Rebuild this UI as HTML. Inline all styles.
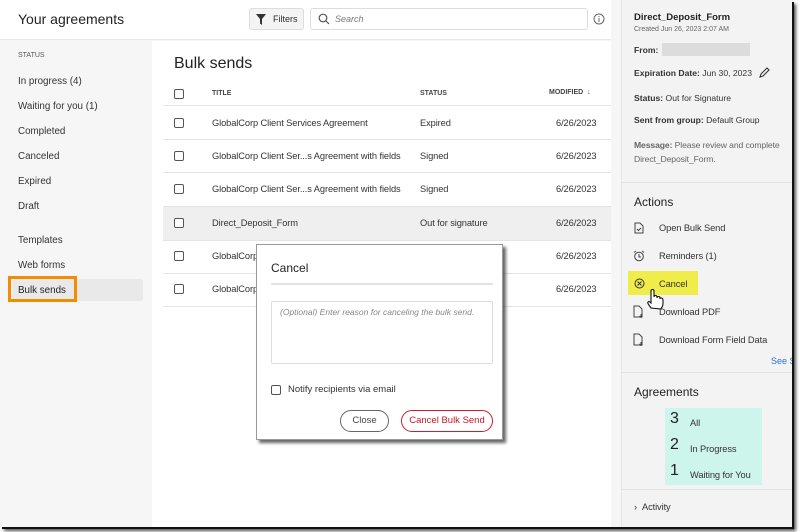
<!DOCTYPE html>
<html><head><meta charset="utf-8"><style>
*{margin:0;padding:0;box-sizing:border-box}
body{width:800px;height:532px;background:#fff;font-family:"Liberation Sans",sans-serif;position:relative;overflow:hidden;color:#2c2c2c}
.a{position:absolute;white-space:nowrap}
.frame{position:absolute;left:0;top:0;width:792px;height:527px;background:#f6f6f6;box-shadow:2px 2px 0 #111,4px 4px 3px #555;overflow:hidden}
.cb{position:absolute;width:10px;height:10px;border:1.5px solid #555;border-radius:2px;background:#fff}
.t{font-size:9.3px;color:#333;letter-spacing:-0.1px}
.sb{font-size:9.8px;color:#333}
.hr{position:absolute;height:1px;background:#e4e4e4}
.r{font-size:8.6px;color:#333}
</style></head><body>
<div class="frame">
 <div class="a" style="left:0;top:0;width:611px;height:40px;background:#fff;border-bottom:1px solid #e8e8e8"></div>
 <div class="a" style="left:18px;top:11px;font-size:14px;color:#222">Your agreements</div>
 <div class="a" style="left:249px;top:8px;width:55px;height:22px;border:1px solid #ddd;border-radius:3px;background:#f4f4f4;font-size:9px;padding:5px 0 0 23px">Filters</div>
 <svg class="a" style="left:256px;top:14px" width="10" height="11"><path d="M0 0h10L6 5v6L4 9.5V5z" fill="#333"/></svg>
 <div class="a" style="left:310px;top:8px;width:278px;height:22px;border:1px solid #ddd;border-radius:3px;background:#fff;font-size:9px;font-style:italic;color:#777;padding:5px 0 0 24px">Search</div>
 <svg class="a" style="left:318px;top:13px" width="12" height="12"><circle cx="5" cy="5" r="3.8" stroke="#555" fill="none" stroke-width="1.2"/><path d="M8 8l3 3" stroke="#555" stroke-width="1.2"/></svg>
 <svg class="a" style="left:593px;top:13px" width="12" height="12"><circle cx="6" cy="6" r="5" stroke="#666" fill="none"/><path d="M6 5v4M6 3v1" stroke="#666"/></svg>

 <div class="a" style="left:0;top:41px;width:152px;height:486px;background:#f6f6f6"></div>
 <div class="a" style="left:18px;top:52px;font-size:7px;color:#555">STATUS</div>
 <div class="a sb" style="left:18px;top:76px">In progress (4)</div>
 <div class="a sb" style="left:18px;top:101px">Waiting for you (1)</div>
 <div class="a sb" style="left:18px;top:126px">Completed</div>
 <div class="a sb" style="left:18px;top:151px">Canceled</div>
 <div class="a sb" style="left:18px;top:176px">Expired</div>
 <div class="a sb" style="left:18px;top:201px">Draft</div>
 <div class="a sb" style="left:18px;top:235px">Templates</div>
 <div class="a sb" style="left:18px;top:260px">Web forms</div>
 <div class="a" style="left:12px;top:279px;width:131px;height:22px;background:#e9e9e9;border-radius:3px"></div>
 <div class="a" style="left:8px;top:276px;width:69px;height:26px;border:3px solid #f28c00"></div>
 <div class="a sb" style="left:18px;top:285px;color:#222">Bulk sends</div>

 <div class="a" style="left:152px;top:41px;width:459px;height:486px;background:#fff"></div>
 <div class="a" style="left:174px;top:55px;font-size:16px;color:#222">Bulk sends</div>
 <div class="cb" style="left:174px;top:89px"></div>
 <div class="a" style="left:212px;top:90px;font-size:7px;color:#444;font-weight:bold">TITLE</div>
 <div class="a" style="left:420px;top:90px;font-size:7px;color:#444;font-weight:bold">STATUS</div>
 <div class="a" style="left:549px;top:89px;font-size:7px;color:#444;font-weight:bold">MODIFIED&nbsp; ↓</div>
 <div class="hr" style="left:163px;top:105px;width:448px"></div>
 <div class="a" style="left:163px;top:206px;width:448px;height:34px;background:#efefef"></div>

 <div class="cb" style="left:174px;top:118px"></div><div class="a t" style="left:212px;top:118px">GlobalCorp Client Services Agreement</div><div class="a t" style="left:420px;top:118px">Expired</div><div class="a t" style="left:556px;top:118px">6/26/2023</div>
 <div class="hr" style="left:163px;top:139px;width:448px"></div>
 <div class="cb" style="left:174px;top:151px"></div><div class="a t" style="left:212px;top:151px">GlobalCorp Client Ser...s Agreement with fields</div><div class="a t" style="left:420px;top:151px">Signed</div><div class="a t" style="left:556px;top:151px">6/26/2023</div>
 <div class="hr" style="left:163px;top:172px;width:448px"></div>
 <div class="cb" style="left:174px;top:184px"></div><div class="a t" style="left:212px;top:184px">GlobalCorp Client Ser...s Agreement with fields</div><div class="a t" style="left:420px;top:184px">Signed</div><div class="a t" style="left:556px;top:184px">6/26/2023</div>
 <div class="hr" style="left:163px;top:206px;width:448px"></div>
 <div class="cb" style="left:174px;top:218px"></div><div class="a t" style="left:212px;top:218px">Direct_Deposit_Form</div><div class="a t" style="left:420px;top:218px">Out for signature</div><div class="a t" style="left:556px;top:218px">6/26/2023</div>
 <div class="hr" style="left:163px;top:240px;width:448px"></div>
 <div class="cb" style="left:174px;top:251px"></div><div class="a t" style="left:212px;top:251px">GlobalCorp</div><div class="a t" style="left:556px;top:251px">6/26/2023</div>
 <div class="hr" style="left:163px;top:273px;width:448px"></div>
 <div class="cb" style="left:174px;top:284px"></div><div class="a t" style="left:212px;top:284px">GlobalCorp</div><div class="a t" style="left:556px;top:284px">6/26/2023</div>
 <div class="hr" style="left:163px;top:306px;width:448px"></div>

 <!-- dialog -->
 <div class="a" style="left:256px;top:244px;width:247px;height:196px;background:#fff;border:1px solid #999;box-shadow:3px 3px 3px rgba(0,0,0,.6)"></div>
 <div class="a" style="left:271px;top:261px;font-size:12px;color:#222">Cancel</div>
 <div class="a" style="left:271px;top:283px;width:222px;height:2px;background:#e2e2e2"></div>
 <div class="a" style="left:271px;top:301px;width:222px;height:63px;border:1px solid #ddd;border-radius:2px;font-size:8.5px;font-style:italic;color:#888;padding:5px 0 0 8px">(Optional) Enter reason for canceling the bulk send.</div>
 <div class="cb" style="left:271px;top:385px"></div>
 <div class="a" style="left:288px;top:384px;font-size:9.5px;color:#333">Notify recipients via email</div>
 <div class="a" style="left:340px;top:410px;width:49px;height:22px;border:1.5px solid #666;border-radius:11px;font-size:9.5px;text-align:center;line-height:19px;color:#444">Close</div>
 <div class="a" style="left:401px;top:410px;width:92px;height:22px;border:1.5px solid #d7192b;border-radius:11px;font-size:9.5px;text-align:center;line-height:19px;color:#c5172a">Cancel Bulk Send</div>

 <!-- right panel -->
 <div class="a" style="left:621px;top:0;width:171px;height:527px;background:#f3f3f3;border-left:1px solid #e6e6e6"></div>
 <div class="a" style="left:634px;top:12px;font-size:9.5px;font-weight:bold;color:#222">Direct_Deposit_Form</div>
 <div class="a" style="left:634px;top:26px;font-size:7px;color:#666">Created Jun 26, 2023 2:07 AM</div>
 <div class="a r" style="left:634px;top:45px;font-weight:bold">From:</div>
 <div class="a" style="left:662px;top:43px;width:88px;height:13px;background:#dcdcdc"></div>
 <div class="a r" style="left:634px;top:68px"><b>Expiration Date:</b> Jun 30, 2023</div>
 <svg class="a" style="left:759px;top:67px" width="11" height="11"><path d="M1 10l1-3 6-6 2 2-6 6z" fill="none" stroke="#333" stroke-width="1.1"/></svg>
 <div class="a r" style="left:634px;top:93px"><b>Status:</b> Out for Signature</div>
 <div class="a r" style="left:634px;top:115px"><b>Sent from group:</b> Default Group</div>
 <div class="a r" style="left:634px;top:138px;color:#666;line-height:14px;letter-spacing:-0.1px"><b>Message:</b> Please review and complete<br>Direct_Deposit_Form.</div>
 <div class="hr" style="left:622px;top:182px;width:170px"></div>
 <div class="a" style="left:634px;top:195px;font-size:12px;color:#222">Actions</div>
 <svg class="a" style="left:634px;top:222px" width="10" height="12"><path d="M1 1h5l3 3v7H1z" fill="none" stroke="#444"/><path d="M3 7l1.5 1.5L7 6" fill="none" stroke="#444"/></svg>
 <div class="a t" style="left:659px;top:223px">Open Bulk Send</div>
 <svg class="a" style="left:633px;top:250px" width="12" height="12"><circle cx="6" cy="6.5" r="4.3" fill="none" stroke="#444"/><path d="M6 4v3h2M1 2.5l2-1.5M11 2.5L9 1" fill="none" stroke="#444"/></svg>
 <div class="a t" style="left:659px;top:251px">Reminders (1)</div>
 <div class="a" style="left:628px;top:271px;width:70px;height:24px;background:#f0ec4a"></div>
 <svg class="a" style="left:634px;top:278px" width="11" height="11"><circle cx="5.5" cy="5.5" r="4.5" fill="none" stroke="#333"/><path d="M3.5 3.5l4 4M7.5 3.5l-4 4" stroke="#333"/></svg>
 <div class="a t" style="left:659px;top:279px">Cancel</div>
 <svg class="a" style="left:633px;top:305px" width="11" height="13"><path d="M1 1h5l3 3v8H1z" fill="none" stroke="#444"/><path d="M8 9v3M6.5 11l1.5 1.5L9.5 11" fill="none" stroke="#444"/></svg>
 <div class="a t" style="left:659px;top:307px">Download PDF</div>
 <svg class="a" style="left:646px;top:288px" width="18" height="22"><path d="M5 20c-2-3-4-5-3-6s2 0 3 1V3c0-2 3-2 3 0v6c0-2 3-2 3 0v1c0-2 3-2 3 0v1c0-2 3-1 3 1v4c0 3-2 4-2 5z" fill="#fff" stroke="#111" stroke-width="1.1"/></svg>
 <svg class="a" style="left:633px;top:333px" width="11" height="13"><path d="M1 1h5l3 3v8H1z" fill="none" stroke="#444"/><path d="M8 9v3M6.5 11l1.5 1.5L9.5 11" fill="none" stroke="#444"/></svg>
 <div class="a t" style="left:659px;top:335px">Download Form Field Data</div>
 <div class="a" style="left:771px;top:356px;font-size:9px;color:#2d6fd6">See S</div>
 <div class="hr" style="left:622px;top:372px;width:170px"></div>
 <div class="a" style="left:634px;top:385px;font-size:12px;color:#222">Agreements</div>
 <div class="a" style="left:665px;top:408px;width:97px;height:77px;background:#cdf5ec"></div>
 <div class="a" style="left:670px;top:410px;font-size:16px;color:#222">3</div><div class="a t" style="left:690px;top:418px">All</div>
 <div class="a" style="left:670px;top:436px;font-size:16px;color:#222">2</div><div class="a t" style="left:690px;top:444px">In Progress</div>
 <div class="a" style="left:670px;top:462px;font-size:16px;color:#222">1</div><div class="a t" style="left:690px;top:470px">Waiting for You</div>
 <div class="hr" style="left:622px;top:489px;width:170px"></div>
 <div class="a t" style="left:634px;top:502px">›&nbsp;&nbsp;Activity</div>
</div>
</body></html>
